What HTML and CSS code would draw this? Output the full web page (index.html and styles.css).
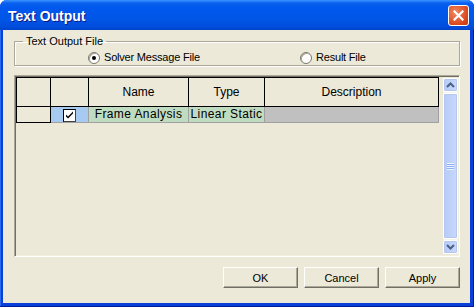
FILE: index.html
```html
<!DOCTYPE html>
<html lang="en">
  <head>
    <meta charset="utf-8" />
    <title>Text Output</title>
    <link rel="stylesheet" href="styles.css">
  </head>
  <body>
    <div class="window">
      <div class="titlebar">
        <span class="title">Text Output</span>
        <span class="close">
          <svg width="11" height="11" viewBox="0 0 11 11">
            <path d="M1.5 1.5 L9.5 9.5 M9.5 1.5 L1.5 9.5" stroke="#fff" stroke-width="2.2" stroke-linecap="square" />
          </svg>
        </span>
      </div>

      <div class="content">
        <fieldset class="group">
          <legend>Text Output File</legend>
          <div class="radios">
            <label class="radio first"><span class="dot checked"></span>Solver Message File</label>
            <label class="radio"><span class="dot"></span>Result File</label>
          </div>
        </fieldset>

        <div class="grid">
          <table>
            <colgroup>
              <col class="c-row">
              <col class="c-check">
              <col class="c-name">
              <col class="c-type">
              <col class="c-desc">
            </colgroup>
            <tr class="head">
              <th></th>
              <th></th>
              <th>Name</th>
              <th>Type</th>
              <th>Description</th>
            </tr>
            <tr class="row">
              <td class="rowhead"></td>
              <td class="check"><span class="box">
                <svg width="9" height="9" viewBox="0 0 9 9">
                  <path d="M1 3.5 L3 5.5 L8 0.5 L8 2.5 L3 7.5 L1 5.5 Z" fill="#000" />
                </svg>
              </span></td>
              <td class="green">Frame Analysis</td>
              <td class="green">Linear Static</td>
              <td class="gray"></td>
            </tr>
          </table>

          <div class="scrollbar">
            <span class="arrow">
              <svg width="9" height="6" viewBox="0 0 9 6"><path d="M1 5 L4.5 1.5 L8 5" fill="none" stroke="#4D6185" stroke-width="2" /></svg>
            </span>
            <span class="thumb"><span class="grip"></span></span>
            <span class="arrow">
              <svg width="9" height="6" viewBox="0 0 9 6"><path d="M1 1 L4.5 4.5 L8 1" fill="none" stroke="#4D6185" stroke-width="2" /></svg>
            </span>
          </div>
        </div>

        <div class="buttons">
          <button>OK</button>
          <button>Cancel</button>
          <button>Apply</button>
        </div>
      </div>
    </div>
  </body>
</html>
```

FILE: styles.css
```css
body {
    margin: 0;
    background: #fff;
    font-family: "Liberation Sans", Arial, sans-serif;
}

.window {
    width: 474px;
    height: 307px;
    box-sizing: border-box;
    display: flex;
    flex-direction: column;
    border-radius: 7px 7px 0 0;
    background: #0A3FD8;
    padding: 0 4px 4px 3px;
    box-shadow: inset -1px -1px 0 #001C9E, inset 1px 0 0 #2A6CF0;
}

.titlebar {
    height: 30px;
    margin: 0 -4px 0 -3px;
    border-radius: 7px 7px 0 0;
    background: linear-gradient(#3D95FF 0, #0A60EE 3px, #0058EE 7px, #0055E5 20px, #004CDA 27px, #0043CB 30px);
    display: flex;
    align-items: center;
    justify-content: space-between;
    padding: 0 5px 0 8px;
}

.title {
    color: #fff;
    font-weight: bold;
    font-size: 14px;
    text-shadow: 1px 1px 0 #0A1883;
    margin-top: 1px;
}

.close {
    width: 19px;
    height: 19px;
    border: 1px solid #fff;
    border-radius: 3px;
    background: radial-gradient(circle at 35% 35%, #F08A63, #D9461C 70%, #C13A12);
    display: flex;
    align-items: center;
    justify-content: center;
    margin-top: 1px;
}

.content {
    flex: 1;
    background: #ECE9D8;
    padding: 5px 10px 9px 11px;
    display: flex;
    flex-direction: column;
    font-size: 11px;
    color: #000;
}

.group {
    margin: 0;
    padding: 0;
    height: 31px;
    box-sizing: border-box;
    border: 1px solid #ACA899;
    box-shadow: inset 1px 1px 0 #fff, 1px 1px 0 #fff;
}

.group legend {
    padding: 0 3px;
    margin-left: 8px;
    line-height: 13px;
}

.radios {
    display: flex;
    padding-left: 73px;
    margin-top: 3px;
    letter-spacing: -0.2px;
}

.radio {
    display: flex;
    align-items: center;
    gap: 4px;
    line-height: 13px;
}

.radio.first {
    width: 212px;
}

.dot {
    width: 12px;
    height: 12px;
    box-sizing: border-box;
    border-radius: 50%;
    background: #fff;
    border: 1px solid #7A786C;
    box-shadow: inset 1px 1px 0 #ACA899;
    display: flex;
    align-items: center;
    justify-content: center;
}

.dot.checked::after {
    content: "";
    width: 4px;
    height: 4px;
    border-radius: 50%;
    background: #000;
}

.grid {
    margin-top: 9px;
    height: 182px;
    box-sizing: border-box;
    border-top: 1px solid #ACA899;
    border-left: 1px solid #ACA899;
    border-right: 1px solid #fff;
    border-bottom: 1px solid #fff;
    box-shadow: inset 1px 1px 0 #716F64, inset -1px -1px 0 #F1EFE2;
    padding: 1px;
    display: flex;
    justify-content: space-between;
    align-items: flex-start;
}

table {
    table-layout: fixed;
    width: 423px;
    border-collapse: collapse;
    font-size: 12px;
}

.c-row { width: 34px; }
.c-check { width: 38px; }
.c-name { width: 100px; }
.c-type { width: 76px; }
.c-desc { width: 174px; }

th {
    height: 28px;
    padding: 0;
    border: 1px solid #000;
    font-weight: normal;
    text-align: center;
    background: #ECE9D8;
}

td {
    height: 15px;
    padding: 0;
    border: 1px solid #A0A0A0;
    text-align: center;
    white-space: nowrap;
    overflow: hidden;
    line-height: 15px;
}

.rowhead {
    border: 1px solid #000;
    background: #ECE9D8;
}

.check {
    background: #A6CAF0;
    line-height: 0;
}

.box {
    display: inline-flex;
    width: 13px;
    height: 13px;
    box-sizing: border-box;
    background: #fff;
    border: 1px solid #000;
    border-right-color: #404040;
    border-bottom-color: #404040;
    align-items: center;
    justify-content: center;
    margin-top: 1px;
}

.green {
    background: #C0DCC0;
    letter-spacing: 0.4px;
}

.gray {
    background: #C0C0C0;
}

.scrollbar {
    width: 15px;
    height: 176px;
    margin-top: 1px;
    display: flex;
    flex-direction: column;
    background: #F4F3EE;
}

.arrow {
    height: 14px;
    box-sizing: border-box;
    border: 1px solid #fff;
    border-radius: 2px;
    background: linear-gradient(90deg, #B7CBF8, #C9D8FC);
    box-shadow: 0 0 0 1px #B5C7EE inset;
    display: flex;
    align-items: center;
    justify-content: center;
}

.thumb {
    flex: 1;
    margin: 1px 0;
    border: 1px solid #fff;
    border-radius: 2px;
    background: linear-gradient(90deg, #B7CBF8, #C9D8FC);
    box-shadow: 0 0 0 1px #B5C7EE inset;
    display: flex;
    align-items: center;
    justify-content: center;
}

.grip {
    width: 7px;
    height: 7px;
    background: repeating-linear-gradient(#EEF4FE 0, #EEF4FE 1px, #8CB0F8 1px, #8CB0F8 2px);
}

.buttons {
    display: flex;
    justify-content: flex-end;
    gap: 6px;
    margin-top: 10px;
}

.buttons button {
    width: 75px;
    height: 21px;
    padding: 0;
    font-family: "Liberation Sans", Arial, sans-serif;
    font-size: 11px;
    color: #000;
    background: #ECE9D8;
    border: 1px solid;
    border-color: #fff #716F64 #716F64 #fff;
    box-shadow: inset -1px -1px 0 #ACA899;
}
```
